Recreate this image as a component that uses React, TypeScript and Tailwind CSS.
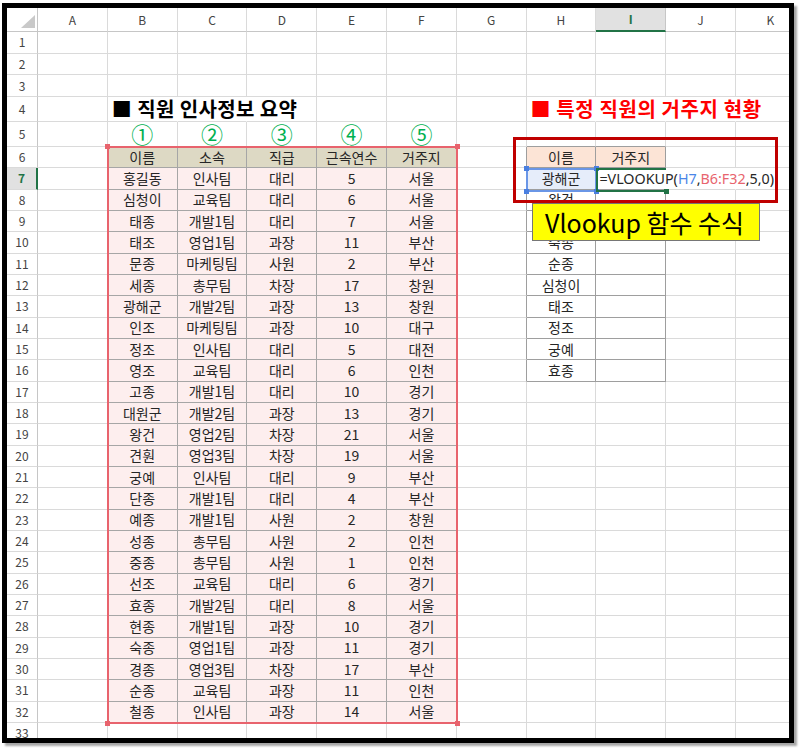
import clsx from "clsx";

const COLS = ["A", "B", "C", "D", "E", "F", "G", "H", "I", "J", "K"];

const HEADS = ["이름", "소속", "직급", "근속연수", "거주지"];
const CIRCLES = ["①", "②", "③", "④", "⑤"];

const STAFF: string[][] = [
  ["홍길동", "인사팀", "대리", "5", "서울"],
  ["심청이", "교육팀", "대리", "6", "서울"],
  ["태종", "개발1팀", "대리", "7", "서울"],
  ["태조", "영업1팀", "과장", "11", "부산"],
  ["문종", "마케팅팀", "사원", "2", "부산"],
  ["세종", "총무팀", "차장", "17", "창원"],
  ["광해군", "개발2팀", "과장", "13", "창원"],
  ["인조", "마케팅팀", "과장", "10", "대구"],
  ["정조", "인사팀", "대리", "5", "대전"],
  ["영조", "교육팀", "대리", "6", "인천"],
  ["고종", "개발1팀", "대리", "10", "경기"],
  ["대원군", "개발2팀", "과장", "13", "경기"],
  ["왕건", "영업2팀", "차장", "21", "서울"],
  ["견훤", "영업3팀", "차장", "19", "서울"],
  ["궁예", "인사팀", "대리", "9", "부산"],
  ["단종", "개발1팀", "대리", "4", "부산"],
  ["예종", "개발1팀", "사원", "2", "창원"],
  ["성종", "총무팀", "사원", "2", "인천"],
  ["중종", "총무팀", "사원", "1", "인천"],
  ["선조", "교육팀", "대리", "6", "경기"],
  ["효종", "개발2팀", "대리", "8", "서울"],
  ["현종", "개발1팀", "과장", "10", "경기"],
  ["숙종", "영업1팀", "과장", "11", "경기"],
  ["경종", "영업3팀", "차장", "17", "부산"],
  ["순종", "교육팀", "과장", "11", "인천"],
  ["철종", "인사팀", "과장", "14", "서울"],
];

const LOOKUP = ["광해군", "왕건", "견훤", "숙종", "순종", "심청이", "태조", "정조", "궁예", "효종"];

const rowH = (r: number) => (r <= 3 ? "h-[21.67px]" : r <= 5 ? "h-[25px]" : "h-[21.34px]");

const inT1 = (r: number, c: number) => r >= 6 && r <= 32 && c >= 1 && c <= 5;
const inT2 = (r: number, c: number) => r >= 6 && r <= 16 && c >= 7 && c <= 8;

function rightBorder(r: number, c: number) {
  // gridlines vanish where text spills over
  if (r === 4 && (c === 1 || c === 2 || c === 7 || c === 8 || c === 9)) return "border-r-transparent";
  if (r === 7 && (c === 8 || c === 9)) return "border-r-transparent";
  if (r >= 6 && r <= 32 && c >= 0 && c <= 5) return "border-r-[#a6a6a6]";
  if (r >= 6 && r <= 16 && c >= 6 && c <= 8) return "border-r-[#9e9e9e]";
  return "border-r-[#dadada]";
}

function bottomBorder(r: number, c: number) {
  if (r >= 5 && r <= 32 && c >= 1 && c <= 5) return "border-b-[#a6a6a6]";
  if (r >= 5 && r <= 16 && c >= 7 && c <= 8) return "border-b-[#9e9e9e]";
  return "border-b-[#dadada]";
}

function Cell({ r, c }: { r: number; c: number }) {
  let content: React.ReactNode = null;
  let left = false;
  let bg = "";

  if (r === 4 && c === 1) {
    content = <span className="text-[20px] font-bold tracking-[0.4px] text-black">■ 직원 인사정보 요약</span>;
    left = true;
  } else if (r === 4 && c === 7) {
    content = <span className="text-[20px] font-bold tracking-[0.6px] text-[#ff0000]">■ 특정 직원의 거주지 현황</span>;
    left = true;
  } else if (r === 5 && c >= 1 && c <= 5) {
    content = <span className="mt-[-2px] text-[22px] leading-none text-[#00b050]">{CIRCLES[c - 1]}</span>;
  } else if (r === 6 && c >= 1 && c <= 5) {
    content = HEADS[c - 1];
  } else if (inT1(r, c)) {
    content = STAFF[r - 7][c - 1];
  } else if (r === 6 && c === 7) {
    content = "이름";
  } else if (r === 6 && c === 8) {
    content = "거주지";
  } else if (r >= 7 && r <= 16 && c === 7) {
    content = LOOKUP[r - 7];
  } else if (r === 7 && c === 8) {
    content = (
      <span className="font-['Noto_Sans','Noto_Sans_CJK_KR',sans-serif] text-[14.3px]">
        =VLOOKUP(<span className="text-[#4a86e8]">H7</span>,<span className="text-[#e8646e]">B6:F32</span>,5,0)
      </span>
    );
    left = true;
  }

  if (r === 6 && c >= 1 && c <= 5) bg = "bg-[#ddd9c4]";
  else if (inT1(r, c)) bg = "bg-[#fdeeee]";
  else if (r === 6 && inT2(r, c)) bg = "bg-[#fce4d6]";
  else if (r === 7 && c === 7) bg = "bg-[#e6edfa]";

  return (
    <div
      className={clsx(
        "flex w-[69.8px] shrink-0 items-center whitespace-nowrap border-b border-r text-[14px]",
        left ? (r === 4 ? "justify-start pl-[4px]" : "justify-start pl-[3px]") : "justify-center",
        rightBorder(r, c),
        bottomBorder(r, c),
        bg
      )}
    >
      {content}
    </div>
  );
}

export default function App() {
  const rows = Array.from({ length: 33 }, (_, i) => i + 1);
  return (
    <div className="min-h-screen bg-white pl-[2px] pt-[3px]">
      <div className="h-[740px] w-[792px] overflow-hidden border-[5px] border-black bg-white shadow-[3px_3px_2px_rgba(0,0,0,0.35)]">
        <div className="relative font-['Noto_Sans_CJK_KR','Noto_Sans',sans-serif] text-[#262626]">
          {/* column header */}
          <div className="flex h-[24px]">
            <div className="relative w-[31px] shrink-0 border-b border-r border-b-[#c6c6c6] border-r-[#c6c6c6]">
              <svg className="absolute left-0 top-0" width="31" height="24">
                <polygon points="14,20 28,20 28,7" fill="#c9c9c9" />
              </svg>
            </div>
            {COLS.map((l, i) => (
              <div
                key={l}
                className={clsx(
                  "flex w-[69.8px] shrink-0 items-center justify-center border-r text-[12px]",
                  i === 8
                    ? "border-b-2 border-b-[#217346] border-r-[#c6c6c6] bg-[#e1e1e1] font-bold text-[#217346]"
                    : "border-b border-b-[#c6c6c6] border-r-[#dadada] text-[#444]"
                )}
              >
                {l}
              </div>
            ))}
          </div>

          {rows.map((r) => (
            <div key={r} className={clsx("flex", rowH(r))}>
              <div
                className={clsx(
                  "flex w-[31px] shrink-0 items-center justify-center border-b border-b-[#dadada] text-[12px]",
                  r === 7
                    ? "border-r-2 border-r-[#217346] bg-[#e1e1e1] font-bold text-[#217346]"
                    : "border-r border-r-[#c6c6c6] text-[#444]"
                )}
              >
                {r}
              </div>
              {COLS.map((_, c) => (
                <Cell key={c} r={r} c={c} />
              ))}
            </div>
          ))}

          {/* copied range B6:F32 */}
          <div className="absolute left-[100px] top-[138px] h-[578px] w-[351px] border-2 border-[#e8636d]">
            <div className="absolute -left-[4px] -top-[4px] h-[5px] w-[5px] bg-[#e8636d]" />
            <div className="absolute -right-[4px] -top-[4px] h-[5px] w-[5px] bg-[#e8636d]" />
            <div className="absolute -bottom-[4px] -left-[4px] h-[5px] w-[5px] bg-[#e8636d]" />
            <div className="absolute -bottom-[4px] -right-[4px] h-[5px] w-[5px] bg-[#e8636d]" />
          </div>

          {/* H7 reference */}
          <div className="absolute left-[519px] top-[160px] h-[24px] w-[71px] border-2 border-[#6a96e6]">
            <div className="absolute -left-[4px] -top-[4px] h-[5px] w-[5px] bg-[#4a7fe0]" />
            <div className="absolute -right-[4px] -top-[4px] h-[5px] w-[5px] bg-[#4a7fe0]" />
            <div className="absolute -bottom-[4px] -left-[4px] h-[5px] w-[5px] bg-[#4a7fe0]" />
            <div className="absolute -bottom-[4px] -right-[4px] h-[5px] w-[5px] bg-[#4a7fe0]" />
          </div>

          {/* active cell I7 */}
          <div className="absolute left-[589px] top-[160px] h-[24px] w-[70px] border-b-2 border-l-2 border-t-2 border-[#217346]">
            <div className="absolute -bottom-[4px] -right-[3px] h-[5px] w-[5px] bg-[#217346]" />
          </div>

          {/* red call-out box */}
          <div className="absolute left-[506px] top-[129px] h-[66px] w-[265px] border-[3px] border-[#c00000]" />

          <div className="absolute left-[525px] top-[195px] flex h-[38px] w-[228px] items-center border border-[#767676] bg-[#ffff00] pl-[12px] text-[25px] leading-none text-black">
            Vlookup 함수 수식
          </div>
        </div>
      </div>
    </div>
  );
}
